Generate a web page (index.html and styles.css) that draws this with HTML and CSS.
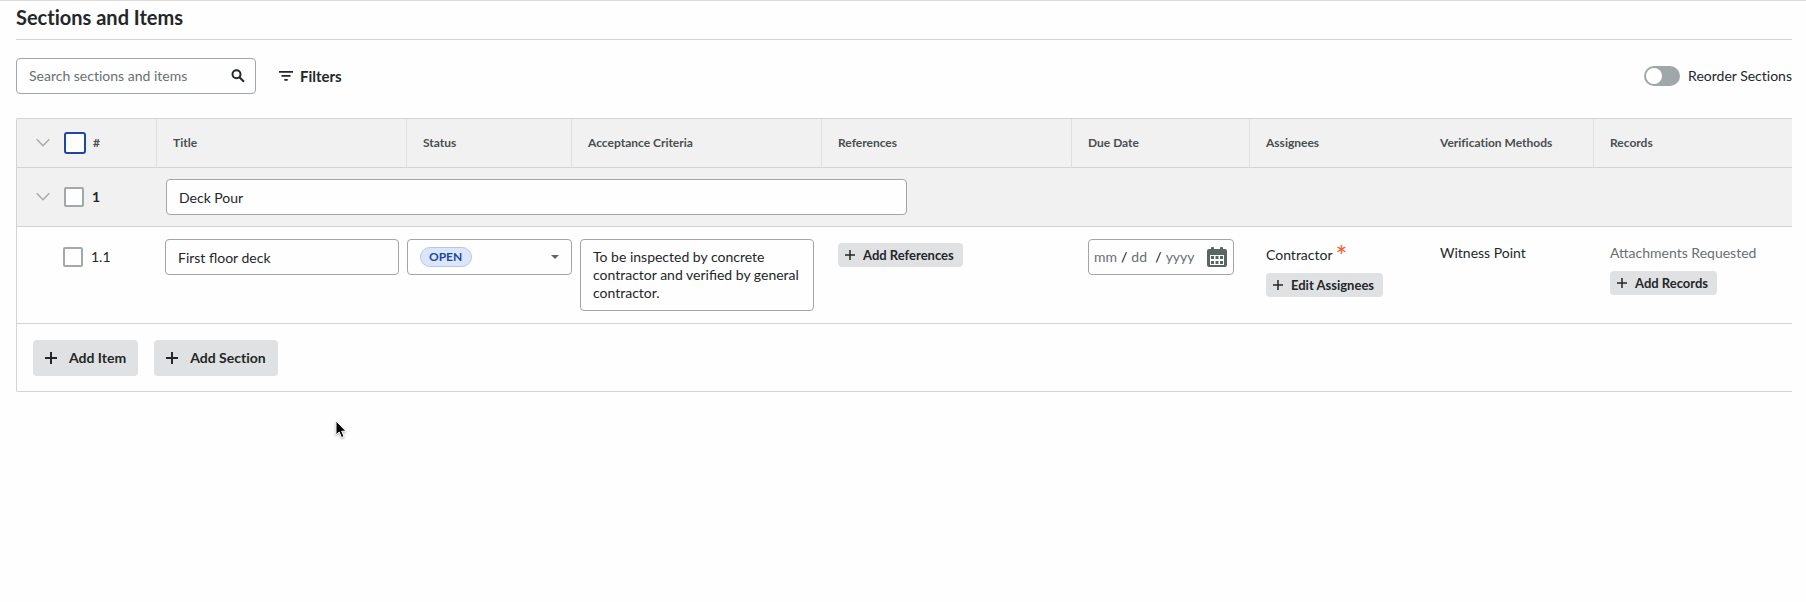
FILE: index.html
```html
<!DOCTYPE html>
<html lang="en">
<head>
  <meta charset="UTF-8" />
  <meta name="viewport" content="width=device-width, initial-scale=1.0"/>
  <title>Sections and Items</title>
  <link rel="stylesheet" href="styles.css">
</head>
<body>
  <main class="page">
    <h2>Sections and Items</h2>

    <div class="toolbar">
      <div class="search">
        <input type="text" id="search" placeholder="Search sections and items" aria-label="Search sections and items">
        <button type="button" class="icon-btn" aria-label="Search">
          <svg width="14" height="14" viewBox="0 0 14 14" fill="none" stroke="#232729" stroke-width="2"><circle cx="5.5" cy="5.2" r="4"/><path d="M8.4 8.2L13 12.8"/></svg>
        </button>
      </div>
      <button type="button" class="filters">
        <svg width="14" height="10" viewBox="0 0 14 10" fill="#232729"><path d="M0 0h14v1.8H0zM2.5 4h9v1.8h-9zM5.3 8h3.4v1.8H5.3z"/></svg>
        Filters
      </button>
      <label class="toggle">
        <input type="checkbox" role="switch">
        Reorder Sections
      </label>
    </div>

    <div class="table-wrap">
      <table>
        <colgroup>
          <col class="col-number">
          <col class="col-title">
          <col class="col-status">
          <col class="col-criteria">
          <col class="col-references">
          <col class="col-date">
          <col class="col-assignees">
          <col class="col-methods">
          <col class="col-records">
        </colgroup>
        <thead>
          <tr>
            <th>
              <div class="number">
                <button type="button" class="icon-btn" aria-label="Collapse all">
                  <svg width="14" height="10" viewBox="0 0 14 10" fill="none" stroke="#a7abad" stroke-width="1.5"><path d="M.7 1.2L7 7.7l6.3-6.5"/></svg>
                </button>
                <input type="checkbox" class="check focused" aria-label="Select all">
                #
              </div>
            </th>
            <th>Title</th>
            <th>Status</th>
            <th>Acceptance Criteria</th>
            <th>References</th>
            <th>Due Date</th>
            <th class="no-line">Assignees</th>
            <th>Verification Methods</th>
            <th class="no-line">Records</th>
          </tr>
        </thead>
        <tbody>
          <!-- Section -->
          <tr class="section-row">
            <td>
              <div class="number">
                <button type="button" class="icon-btn" aria-label="Collapse section">
                  <svg width="14" height="10" viewBox="0 0 14 10" fill="none" stroke="#a7abad" stroke-width="1.5"><path d="M.7 1.2L7 7.7l6.3-6.5"/></svg>
                </button>
                <input type="checkbox" class="check" aria-label="Select section 1">
                <b>1</b>
              </div>
            </td>
            <td colspan="8"><input type="text" class="field section-title" value="Deck Pour" aria-label="Section title"></td>
          </tr>

          <!-- Item -->
          <tr class="item-row">
            <td>
              <div class="number">
                <input type="checkbox" class="check" aria-label="Select item 1.1">
                1.1
              </div>
            </td>
            <td class="cell-field"><input type="text" class="field" value="First floor deck" aria-label="Item title"></td>
            <td class="cell-status">
              <label class="field status">
                <select aria-label="Status">
                  <option>OPEN</option>
                </select>
                <svg width="8" height="4" viewBox="0 0 8 4" fill="#5e6669"><path d="M0 0h8L4 4z"/></svg>
              </label>
            </td>
            <td class="cell-field"><textarea class="field" rows="3" aria-label="Acceptance criteria">To be inspected by concrete contractor and verified by general contractor.</textarea></td>
            <td class="cell-references">
              <button type="button" class="btn btn-small"><svg width="10" height="10" viewBox="0 0 10 10"><path d="M5 0v10M0 5h10"/></svg>Add References</button>
            </td>
            <td>
              <div class="field date">
                <input type="text" class="mm" placeholder="mm" maxlength="2" aria-label="Month"><span>/</span>
                <input type="text" class="dd" placeholder="dd" maxlength="2" aria-label="Day"><span>/</span>
                <input type="text" class="yyyy" placeholder="yyyy" maxlength="4" aria-label="Year">
                <button type="button" class="icon-btn" aria-label="Open calendar">
                  <svg width="20" height="20" viewBox="0 0 20 20">
                    <path fill="#5b6664" d="M2 2h2V1q0-1 1-1h1q1 0 1 1v1h6V1q0-1 1-1h1q1 0 1 1v1h2q2 0 2 2v14q0 2-2 2H2q-2 0-2-2V4q0-2 2-2z"/>
                    <path fill="#fefefe" d="M3 8h14v10H3z"/>
                    <path fill="#5b6664" d="M4 9h3v3H4zM8.500 9h3v3h-3zM13 9h3v3h-3zM4 14h3v3H4zM8.500 14h3v3h-3zM13 14h3v3h-3z"/>
                  </svg>
                </button>
              </div>
            </td>
            <td class="cell-assignees">
              <p>Contractor<span class="required">*</span></p>
              <button type="button" class="btn btn-small"><svg width="10" height="10" viewBox="0 0 10 10"><path d="M5 0v10M0 5h10"/></svg>Edit Assignees</button>
            </td>
            <td><p>Witness Point</p></td>
            <td>
              <p class="muted">Attachments Requested</p>
              <button type="button" class="btn btn-small"><svg width="10" height="10" viewBox="0 0 10 10"><path d="M5 0v10M0 5h10"/></svg>Add Records</button>
            </td>
          </tr>
        </tbody>
      </table>

      <div class="table-footer">
        <button type="button" class="btn"><svg width="12" height="12" viewBox="0 0 12 12"><path d="M6 0v12M0 6h12"/></svg>Add Item</button>
        <button type="button" class="btn"><svg width="12" height="12" viewBox="0 0 12 12"><path d="M6 0v12M0 6h12"/></svg>Add Section</button>
      </div>
    </div>
  </main>

  <svg class="pointer" width="13" height="19" viewBox="0 0 13 19"><path d="M1 1v14l3.200-3 2.300 5.500 2.500-1-2.300-5.300H11z" fill="#000" stroke="#fff" stroke-width="1"/></svg>
</body>
</html>
```

FILE: styles.css
```css
* {
  box-sizing: border-box;
}

body {
  margin: 0;
  font-family: Lato, sans-serif;
  font-size: 14px;
  line-height: 20px;
  color: #232729;
  background: #fefefe;
}

button,
input,
select,
textarea {
  font: inherit;
  color: inherit;
  margin: 0;
}

h2,
th,
.toolbar,
.search input,
.btn {
  font-variant-ligatures: none;
}

.page {
  padding: 0 14px 0 16px;
  border-top: 1px solid #dcdcdc;
}

h2 {
  margin: 0;
  padding: 4px 0 10px;
  font-size: 20px;
  line-height: 24px;
  border-bottom: 1px solid #d0d4d6;
}

p {
  margin: 0;
}

/* Toolbar */
.toolbar {
  display: flex;
  align-items: center;
  gap: 23px;
  padding: 18px 0 24px;
}

.search {
  display: flex;
  align-items: center;
  width: 240px;
  height: 36px;
  padding: 0 10px 0 12px;
  border: 1px solid #9fa6aa;
  border-radius: 4px;
}

.search input {
  flex: 1;
  min-width: 0;
  padding: 0;
  border: none;
  outline: none;
  background: none;
}

::placeholder {
  color: #6a6f72;
  opacity: 1;
}

.icon-btn {
  display: flex;
  padding: 0;
  border: none;
  background: none;
  cursor: pointer;
}

.filters {
  display: flex;
  align-items: center;
  gap: 7px;
  padding: 0;
  border: none;
  background: none;
  font-size: 15px;
  font-weight: bold;
  cursor: pointer;
}

.toggle {
  display: flex;
  align-items: center;
  gap: 8px;
  margin-left: auto;
  cursor: pointer;
}

.toggle input {
  appearance: none;
  display: flex;
  width: 36px;
  height: 20px;
  padding: 2px;
  border-radius: 10px;
  background: #a0a7a9;
}

.toggle input::before {
  content: "";
  width: 16px;
  height: 16px;
  border-radius: 50%;
  background: #fff;
}

.toggle input:checked {
  justify-content: flex-end;
  background: #1d47a1;
}

/* Table */
.table-wrap {
  border: 1px solid #d0d4d6;
  border-right: none;
  border-radius: 2px 0 0 2px;
}

table {
  width: 100%;
  table-layout: fixed;
  border-collapse: separate;
  border-spacing: 0;
}

.col-number { width: 140px; }
.col-title,
.col-criteria,
.col-references { width: 250px; }
.col-status { width: 165px; }
.col-date { width: 178px; }
.col-assignees { width: 174px; }
.col-methods { width: 170px; }

th {
  height: 49px;
  padding: 0 16px;
  font-size: 12px;
  text-align: left;
  color: #4a4e50;
  background: #f1f1f2;
  border-right: 1px solid #dde0e2;
  border-bottom: 1px solid #d0d4d6;
}

th.no-line {
  border-right: none;
}

td {
  border-bottom: 1px solid #d0d4d6;
  padding: 0 16px;
}

th:first-child,
td:first-child {
  padding: 0 0 0 19px;
}

.number {
  display: flex;
  align-items: center;
}

.number .icon-btn {
  margin-right: 14px;
}

.check {
  appearance: none;
  width: 20px;
  height: 20px;
  margin-right: 8px;
  border: 2px solid #a4a8aa;
  border-radius: 2px;
  background: #fefefe;
}

.check.focused {
  width: 22px;
  height: 22px;
  border-color: #1d47a1;
  border-radius: 3px;
  margin-right: 7px;
}

.check:checked {
  background: #1d47a1;
}

.section-row td {
  height: 59px;
  padding-left: 9px;
  background: #f1f1f2;
}

.section-row td:first-child {
  padding-left: 19px;
}

.item-row td {
  padding-top: 12px;
  padding-bottom: 12px;
  vertical-align: top;
}

.item-row td:first-child {
  padding: 20px 0 0 46px;
}

.item-row td.cell-field {
  padding-left: 8px;
  padding-right: 8px;
}

.item-row td.cell-status {
  padding-left: 0;
  padding-right: 0;
}

.item-row td.cell-references {
  padding-top: 16px;
}

.item-row p {
  line-height: 28px;
  margin-bottom: 4px;
}

.item-row .cell-assignees p {
  line-height: 32px;
  margin-bottom: 2px;
}

.field {
  display: block;
  width: 100%;
  height: 36px;
  padding: 0 12px;
  border: 1px solid #a0a5a8;
  border-radius: 4px;
  background: #fefefe;
}

textarea.field {
  height: 72px;
  padding: 8px 12px;
  line-height: 18px;
  resize: none;
  overflow: hidden;
}

.section-title {
  width: 741px;
  max-width: 100%;
}

.status {
  display: flex;
  align-items: center;
  justify-content: space-between;
}

.status select {
  appearance: none;
  height: 20px;
  padding: 0 8px;
  font-size: 12px;
  font-weight: bold;
  line-height: 18px;
  color: #1d47a1;
  background: #dbe6fb;
  border: 1px solid #b3c8ef;
  border-radius: 10px;
}

.date {
  display: flex;
  align-items: center;
  gap: 4px;
  padding: 0 6px 0 5px;
}

.date input {
  padding: 0;
  border: none;
  outline: none;
  background: none;
}

.date span {
  color: #000;
}

.date .mm { width: 23px; }
.date .dd { width: 20px; }
.date .yyyy { width: 34px; }

.date .icon-btn {
  margin-left: auto;
}

.item-row .required {
  margin-left: 3px;
  font-size: 28px;
  line-height: 20px;
  vertical-align: middle;
  color: #f2602c;
}

.muted {
  color: #6a6f72;
}

/* Buttons */
.btn {
  display: flex;
  align-items: center;
  gap: 12px;
  height: 36px;
  padding: 0 12px;
  border: none;
  border-radius: 4px;
  background: #e0e1e3;
  font-size: 14px;
  font-weight: bold;
  cursor: pointer;
}

.btn svg {
  stroke: #232729;
  stroke-width: 2;
}

.btn-small {
  gap: 8px;
  height: 24px;
  padding: 0 9px 0 7px;
  font-size: 13px;
}

.btn-small svg {
  stroke-width: 1.5;
}

.table-footer {
  display: flex;
  gap: 16px;
  padding: 16px 16px 15px;
}

/* Mouse pointer over the page */
.pointer {
  position: absolute;
  left: 335px;
  top: 420px;
  filter: drop-shadow(0 1px 1px rgba(0, 0, 0, 0.3));
}
```
